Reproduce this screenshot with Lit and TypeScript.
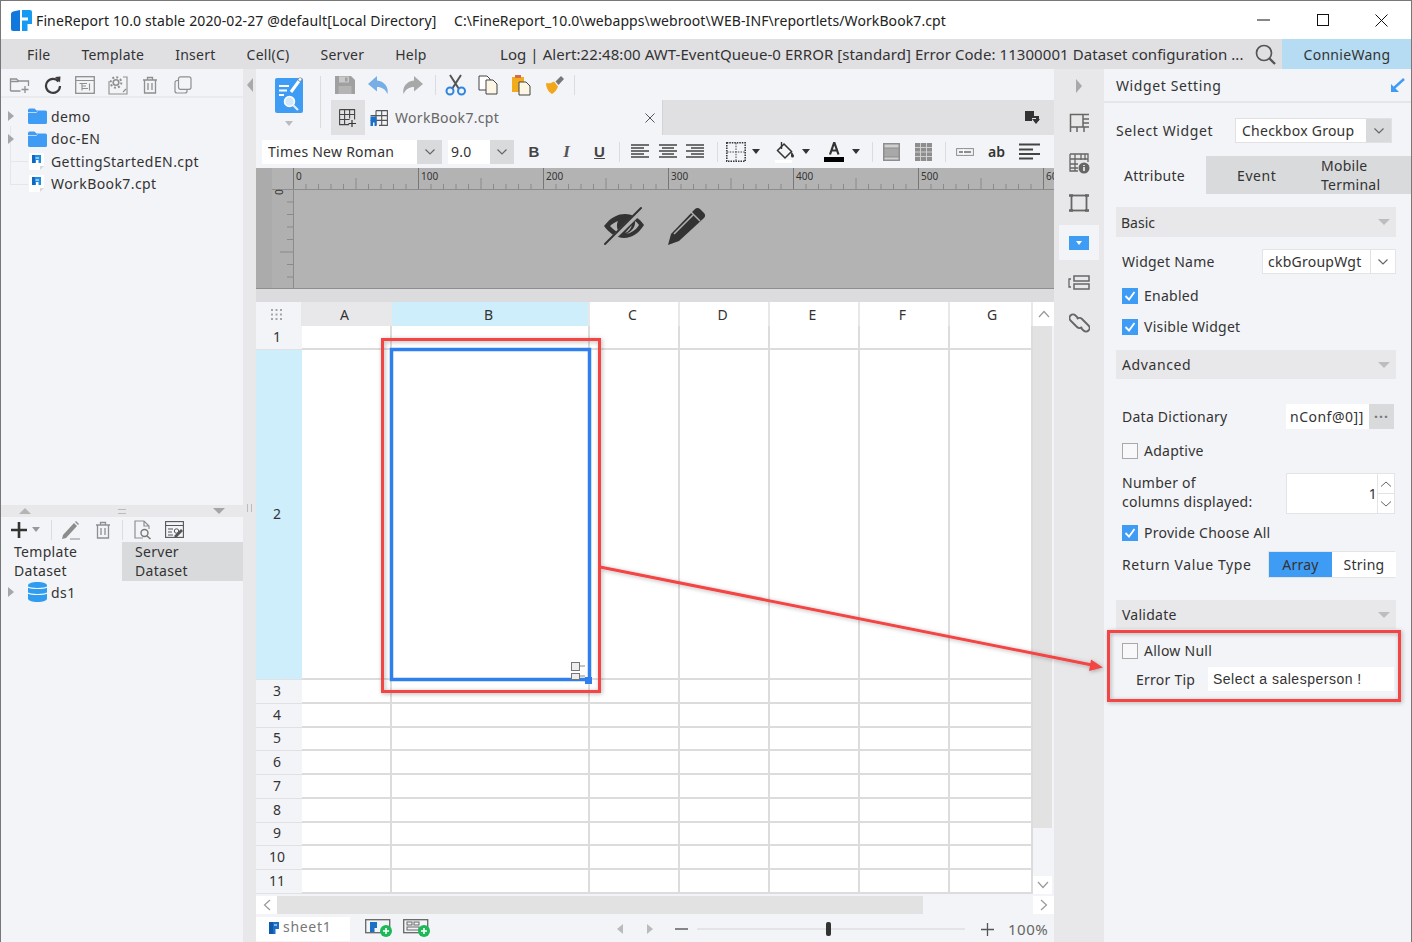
import { LitElement, html, css, svg } from "lit";
import { customElement } from "lit/decorators.js";

const G = "#8f8f8f";
const icon = (w: number, h: number, body: unknown) =>
  html`<svg class="ic" width=${w} height=${h} viewBox="0 0 ${w} ${h}" fill="none">${body}</svg>`;

const chevron = (c = "#666") => icon(12, 8, svg`<path d="M1.5 1.5 6 6l4.5-4.5" stroke=${c} stroke-width="1.2"/>`);
const caret = (c = "#333") => icon(8, 5, svg`<path d="M0 0h8L4 5z" fill=${c}/>`);

const I = {
  logo: icon(21, 21, svg`<path d="M0 4Q0 2 2 1.500L9 0V21H2Q0 21 0 19z" fill="#1077dc"/><path d="M11 0H19Q21 0 21 2V14H16.500V21H11V10.500H17V7.500H11z" fill="#179bf2"/>`),
  newFolder: icon(22, 20, svg`<path d="M1.5 16V4h6l2 2h10v5M1.5 16h10M1.5 6.5h8" stroke=${G} stroke-width="1.3"/><path d="M16 11v7M12.5 14.5h7" stroke=${G} stroke-width="1.3"/>`),
  refresh: icon(18, 18, svg`<path d="M14.5 5.5A7 7 0 1 0 16 10" stroke="#3c3c3c" stroke-width="2.2"/><path d="M11 1l5.500-.5L16 6.500z" fill="#3c3c3c"/>`),
  panel: icon(20, 18, svg`<rect x=".7" y=".7" width="18.6" height="16.6" stroke=${G} stroke-width="1.3"/><path d="M1 4.500h18M4.500 7.500H12M7 7.500v7M7 10h4M7 12.500h6M14.500 7.500v7" stroke=${G} stroke-width="1.1"/>`),
  gearFile: icon(20, 20, svg`<circle cx="8" cy="7.500" r="2.800" stroke=${G} stroke-width="1.600"/><circle cx="8" cy="7.500" r="5.300" stroke=${G} stroke-width="2" stroke-dasharray="2 2.100"/><path d="M1 6v13h18V2h-4M15 17l3-3" stroke=${G} stroke-width="1.100"/>`),
  trash: icon(16, 18, svg`<path d="M1 4h14M5.500 4V1.500h5V4M2.500 4v13h11V4M6 7v7M10 7v7" stroke=${G} stroke-width="1.3"/>`),
  copyBox: icon(18, 18, svg`<rect x="4.500" y=".8" width="12.500" height="12.500" rx="2" stroke=${G} stroke-width="1.2"/><path d="M4.500 4.500H3a2 2 0 0 0-2 2V15a2 2 0 0 0 2 2h8a2 2 0 0 0 2-2v-1.500" stroke=${G} stroke-width="1.2"/>`),
  folder: icon(19, 16, svg`<path d="M0 2a1.500 1.500 0 0 1 1.500-1.500h5L8.500 2.500h9A1.500 1.500 0 0 1 19 4v10.500a1.500 1.500 0 0 1-1.500 1.500h-16A1.500 1.500 0 0 1 0 14.500z" fill="#3f9cf5"/><path d="M0 4.500h8.500l1-1" stroke="#f4f5f8" stroke-width=".7"/>`),
  cpt: icon(16, 17, svg`<path d="M0 0h15v12l-4 5H0z" fill="#fff"/><path d="M3 2h9v8H9.500V7H7v3H3z" fill="#1c8ee6"/><path d="M3 2h3v8H3z" fill="#1467bf"/><path d="M6.500 5h3.500" stroke="#fff"/><path d="M11 13h4l-4 4z" fill="#d8d8d8"/>`),
  gridAdd: icon(18, 18, svg`<path d="M.6.6h15v10M.6.6v15h9.500M.6 5.500h15M.6 10.500h10M5.600.6v15M10.600.6v9" stroke="#444" stroke-width="1.100"/><path d="M13 11v7M9.500 14.500h7.500" stroke="#333" stroke-width="1.2"/>`),
  gridCpt: icon(18, 16, svg`<path d="M6 .6h11.400v14.800H9M6 .6v5M.6 5.600h16.800M.6 10.400h16.800M6 5.600v9.800M11.700.6v14.800" stroke="#555" stroke-width="1.100"/><path d="M.5 6.500h6V16H4.500v-3.500H3V16H.5z" fill="#1a6fc6"/>`),
  save: icon(22, 20, svg`<path d="M1 1h16l4 4v14H1z" fill="#a0a0a0"/><rect x="5" y="1.500" width="10" height="6" fill="#c9c9c9"/><rect x="11" y="2.500" width="2.500" height="4" fill="#a0a0a0"/><rect x="4.500" y="11" width="13" height="8" fill="#b4b4b4"/>`),
  undo: icon(22, 20, svg`<path d="M9 1 0 9l9 7.500V12c5 0 8 2 10.500 7 1.500-7-3.500-13-10.500-13.500z" fill="#77aee6"/>`),
  redo: icon(22, 20, svg`<path d="M12 1l9 8-9 7.500V12c-5 0-8 2-10.500 7C0 12 5 6 12 5.500z" fill="#a8a8a8"/>`),
  cut: icon(22, 22, svg`<path d="M5 1l9 14M16 1 7 15" stroke="#555" stroke-width="2"/><circle cx="5" cy="17" r="3.500" stroke="#2f86e0" stroke-width="2"/><circle cx="16.500" cy="17" r="3.500" stroke="#2f86e0" stroke-width="2"/>`),
  copy: icon(20, 20, svg`<path d="M1 1h8l3 3v11H1z" fill="#fff" stroke="#444"/><path d="M8 5h7l4 4v10H8z" fill="#fdf6e5" stroke="#444"/>`),
  paste: icon(20, 22, svg`<path d="M1 3h12v15H1z" fill="#f2ac1b"/><path d="M4 1h6v3H4z" fill="#d66a4c"/><path d="M8 8h7l4 4v9H8z" fill="#fdf6e5" stroke="#444"/>`),
  brush: icon(20, 20, svg`<path d="M1 8c4 1 6-.5 8-1.500l4 5c-1 3-3 6-6 7.500-4-2-6-7-6-11z" fill="#f2a71b"/><path d="M10.500 6.500 16 1l3 3-5.500 6z" fill="#777"/>`),
  bigDoc: icon(28, 36, svg`<rect y="1" width="28" height="35" rx="2" fill="#3f9cf5"/><path d="M4 9h10M4 13.500h8M4 18h5" stroke="#fff" stroke-width="1.800"/><path d="M16 15 24 4" stroke="#fff" stroke-width="3"/><circle cx="25" cy="2.500" r="1.800" fill="#fff" stroke="#777" stroke-width=".6"/><circle cx="14.500" cy="24.500" r="5" fill="#d3e8fb" stroke="#fff" stroke-width="1.500"/><path d="M18 28l5 5" stroke="#e9e9e9" stroke-width="2.200"/>`),
  fmtSmall: icon(16, 16, svg`<path d="M1 1h9v5h5v5h-3V8H8v3H1z" fill="#333"/><path d="M8 9h8l-4 5z" fill="#333"/>`),
  alignL: icon(18, 15, svg`<path d="M0 1h18M0 4h13M0 7h18M0 10h13M0 13h18" stroke="#444" stroke-width="1.300"/>`),
  alignC: icon(18, 15, svg`<path d="M0 1h18M3 4h12M0 7h18M3 10h12M0 13h18" stroke="#444" stroke-width="1.300"/>`),
  alignR: icon(18, 15, svg`<path d="M0 1h18M5 4h13M0 7h18M5 10h13M0 13h18" stroke="#444" stroke-width="1.300"/>`),
  border: icon(20, 20, svg`<rect x=".8" y=".8" width="18.400" height="18.400" stroke="#333" stroke-width="1.500" stroke-dasharray="1.500 1"/><path d="M10 1v18M1 10h18" stroke="#444" stroke-dasharray="1.500 1.200"/>`),
  fill: icon(20, 22, svg`<path d="M9 3l7.500 7.500-6.500 6.500-7.500-7.500z" stroke="#333" stroke-width="1.500"/><path d="M6.500 1v7" stroke="#333" stroke-width="1.400"/><path d="M16.500 10.500c1.500 2 2.500 3.500 2.500 4.500a1.500 1.500 0 0 1-3 0c0-1 0-2 .5-4.500z" fill="#333"/><rect y="19" width="17" height="3" fill="#fff"/>`),
  color: icon(20, 22, svg`<path d="M6 13.500 10 2h.5l4 11.500M7.300 9.500h6" stroke="#333" stroke-width="2.200"/><rect y="16" width="20" height="5" fill="#000"/>`),
  merge: icon(17, 18, svg`<rect width="17" height="18" fill="#8e8e8e"/><rect x="1.500" y="1.500" width="14" height="3" fill="#d0d0d0"/><rect x="1.500" y="5.500" width="14" height="8" fill="#a8a8a8"/><rect x="1.500" y="14.500" width="14" height="2" fill="#d0d0d0"/>`),
  unmerge: icon(17, 18, svg`<rect width="17" height="18" fill="#8e8e8e"/><path d="M5.500 0v18M11.500 0v18M0 4.500h17M0 9h17M0 13.500h17" stroke="#d0d0d0"/>`),
  textbox: icon(18, 10, svg`<rect x=".6" y="1.600" width="16.800" height="6.800" stroke=${G}/><path d="M3 5h12" stroke=${G} stroke-width="2"/><path d="M7.500 2v6" stroke="#fff"/>`),
  lines: icon(21, 17, svg`<path d="M0 1.500h21M0 6.500h14M0 11h21M0 15.500h14" stroke="#444" stroke-width="2"/>`),
  search: icon(22, 21, svg`<circle cx="9" cy="9" r="7.500" stroke="#555" stroke-width="1.700"/><path d="M14.500 14.500 20 20" stroke="#555" stroke-width="2.400"/>`),
  minW: icon(14, 2, svg`<path d="M0 1h13" stroke="#111"/>`),
  maxW: icon(12, 12, svg`<rect x=".5" y=".5" width="11" height="11" stroke="#111"/>`),
  closeW: icon(13, 13, svg`<path d="M.5.500l12 12M12.500.500l-12 12" stroke="#111"/>`),
  pinArrow: icon(15, 15, svg`<path d="M14 1 4 10" stroke="#3f9cf5" stroke-width="2.400"/><path d="M1 6v8h8z" fill="#3f9cf5"/>`),
  rFrame: icon(21, 20, svg`<path d="M1.500 19V1.500H20M1.500 14H20M8 14v5M15 14v5M14 1.500V14M14 6H20M14 10H20" stroke="#666" stroke-width="1.500"/>`),
  rInfo: icon(21, 21, svg`<path d="M1 1h18v8M1 1v17h8M1 6h18M1 11h8M1 15h8M6 1v17M12 1v6M16 1v6" stroke="#666" stroke-width="1.300"/><circle cx="15" cy="15" r="5.500" fill="#666"/><path d="M15 12v1M15 14v4" stroke="#fff" stroke-width="1.500"/>`),
  rBox: icon(20, 20, svg`<rect x="2.500" y="2.500" width="15" height="15" stroke="#666" stroke-width="1.800"/><path d="M0 2.500h4M16 2.500h4M0 17.500h4M16 17.500h4" stroke="#666" stroke-width="2.400"/>`),
  rWidget: icon(20, 14, svg`<rect width="20" height="14" fill="#3f9cf5"/><path d="M7 5h6l-3 4z" fill="#fff"/>`),
  rForm: icon(22, 16, svg`<path d="M3 4H1v8h2" stroke="#666" stroke-width="1.300"/><rect x="6" y="1" width="15" height="5" stroke="#666" stroke-width="1.500"/><rect x="6" y="9" width="15" height="5" stroke="#666" stroke-width="1.500"/>`),
  rLink: icon(21, 20, svg`<path d="M9 5 6.500 2.500a3.500 3.500 0 0 0-5 5L8 14a3.500 3.500 0 0 0 5 0" stroke="#666" stroke-width="1.800"/><path d="M12 15l2.500 2.500a3.500 3.500 0 0 0 5-5L13 6a3.500 3.500 0 0 0-5 0" stroke="#666" stroke-width="1.800"/>`),
  plus: icon(18, 18, svg`<path d="M9 1v16M1 9h16" stroke="#333" stroke-width="2.600"/>`),
  pencil: icon(20, 20, svg`<path d="M2 15 13 3l3 3L5 18l-4 1z" fill="#8c8c8c"/><path d="M14 2l1-1 3 3-1 1z" fill="#8c8c8c"/><path d="M9 19h10" stroke="#8c8c8c"/>`),
  docSearch: icon(18, 20, svg`<path d="M9 18H1V1h9l5 5v3M10 1v5h5" stroke=${G} stroke-width="1.2"/><circle cx="10.500" cy="13" r="3.500" stroke="#777" stroke-width="1.400"/><path d="M13 16l3.500 3" stroke="#777" stroke-width="1.600"/>`),
  dbEdit: icon(20, 18, svg`<rect x=".6" y=".6" width="17.800" height="15.800" stroke="#555" stroke-width="1.100"/><path d="M1 4.500h17M3 8h5M3 11h4M3 14h5" stroke="#555"/><path d="M9 15l7-7 2 2-7 7z" fill="#555"/><circle cx="11.500" cy="10" r="2.200" stroke="#555"/>`),
  db: icon(19, 20, svg`<path d="M0 3.500C0 1.500 4 0 9.500 0S19 1.500 19 3.500v13c0 2-4 3.500-9.500 3.500S0 18.500 0 16.500z" fill="#2f9cf0"/><path d="M0 5c2 2 17 2 19 0M0 11c2 2 17 2 19 0" stroke="#f3f4f7" stroke-width="1.2"/>`),
  eye: icon(42, 40, svg`<path d="M1 20C8 11 15 8 22 8c8 0 14 4 19 11-5 8-12 13-20 13C13 32 6 27 1 20z" fill="#333"/><path d="M7 20c3 3 6 6 10 7-3-3-4-8-2-12-3 1-6 3-8 5z" fill="#b2b2b2"/><path d="M32 15c2 1 3 3 4 4-3 5-8 8-13 9 5-2 10-7 9-13zM22 27c3-1 6-4 7-8l-7 8z" fill="#b2b2b2"/><path d="M4 38 40 3" stroke="#b2b2b2" stroke-width="5"/><path d="M2 38 38 2" stroke="#333" stroke-width="2" stroke-linecap="round"/>`),
  bigPencil: icon(40, 40, svg`<path d="M28 3c1.500-1.500 3.500-1.500 5 0l4 4c1.500 1.500 1.500 3.500 0 5L12 35 1 39l3-11z" fill="#333"/><path d="M7 28 26 9" stroke="#b2b2b2" stroke-width="1.600"/><path d="M24 6l9 9" stroke="#b2b2b2" stroke-width="1.400"/>`),
  sheetIc: icon(11, 12, svg`<path d="M0 0h10v7H6.500v5H0z" fill="#1a6fc6"/><path d="M0 0h4v12H0z" fill="#0f5aa8"/><path d="M5 3h3" stroke="#fff"/>`),
  addReport: icon(28, 18, svg`<rect x=".7" y=".7" width="24" height="13" stroke="#666" stroke-width="1.3"/><path d="M5 3h7v6H9.500v4H5z" fill="#1a6fc6"/><circle cx="21" cy="12" r="6" fill="#1fb858"/><path d="M21 9v6M18 12h6" stroke="#fff" stroke-width="1.6"/>`),
  addForm: icon(28, 18, svg`<rect x=".7" y=".7" width="24" height="13" stroke="#666" stroke-width="1.3"/><rect x="4" y="3" width="5" height="3" stroke="#666"/><rect x="11" y="3" width="5" height="3" stroke="#666"/><rect x="4" y="8" width="12" height="3" stroke="#666"/><circle cx="21" cy="12" r="6" fill="#1fb858"/><path d="M21 9v6M18 12h6" stroke="#fff" stroke-width="1.6"/>`),
  check: icon(16, 16, svg`<path d="M3.500 8 7 11.500 12.500 4" stroke="#fff" stroke-width="1.8"/>`),
  grip: icon(14, 12, svg`${[1, 5.5, 10].map((y) => [1, 5.5, 10].map((x) => svg`<rect x=${x + 1} y=${y} width="2" height="2" fill="#a5a5a5"/>`))}`),
};

const triL = icon(6, 14, svg`<path d="M6 0v14L0 7z" fill="#a9a9a9"/>`);
const triR = icon(6, 14, svg`<path d="M0 0v14l6-7z" fill="#a9a9a9"/>`);
const tree = icon(6, 10, svg`<path d="M0 0v10l6-5z" fill="#a6a6a6"/>`);
const secTri = icon(12, 6, svg`<path d="M0 0h12L6 6z" fill="#bdbdbd"/>`);

const ruler = () => {
  const marks = [] as unknown[];
  for (let i = 0; i <= 61; i++) {
    const x = 37 + i * 12.5;
    const h = i % 10 === 0 ? 21 : i % 5 === 0 ? 11 : 5;
    marks.push(svg`<path d="M${x + 0.5} ${21 - h}V21" stroke=${i % 10 === 0 ? "#777" : "#8a8a8a"}/>`);
    if (i % 10 === 0) marks.push(svg`<text x=${x + 3} y="12" class="rt">${i * 10}</text>`);
  }
  for (let i = 1; i <= 7; i++) {
    const y = 21 + i * 12.5;
    marks.push(svg`<path d="M${i === 5 ? 24 : 31} ${y + 0.5}H37" stroke="#8a8a8a"/>`);
  }
  return html`<svg class="ruler" width="798" height="121" viewBox="0 0 798 121">
    <rect width="798" height="121" fill="#b3b3b3"/>
    <rect width="16" height="121" fill="#ababab"/>
    <rect x="16" y="21" width="21" height="100" fill="#b0b0b0"/>
    <path d="M0 120.500H798" stroke="#8e8e8e"/>
    <path d="M37.500 0V120M16 21.500H798" stroke="#8c8c8c"/>
    ${marks}
    <text class="rt" transform="translate(19 24) rotate(90)" text-anchor="middle">0</text>
  </svg>`;
};

const cols = ["A", "B", "C", "D", "E", "F", "G"];
const rows = [1, 2, 3, 4, 5, 6, 7, 8, 9, 10, 11];

const sp = (w: number) => html`<span class="sp" style="width:${w}px"></span>`;
const btn = (w: number, c: unknown) => html`<span class="btn" style="width:${w}px">${c}</span>`;

@customElement("app-root")
export class AppRoot extends LitElement {
  static styles = css`
    :host {
      display: block; position: relative; width: 1412px; height: 942px; overflow: hidden; box-sizing: border-box;
      border: 1px solid #777; border-bottom: 0; background: #f3f4f7; color: #333;
      font-family: "Noto Sans", "Open Sans", sans-serif; font-size: 14px;
    }
    .ic { display: block; flex: none; }
    .btn { display: flex; align-items: center; justify-content: center; flex: none; }
    .sp { display: block; flex: none; }
    .title { height: 38px; background: #fff; display: flex; align-items: center; padding-left: 10px; color: #222; white-space: nowrap; font-size: 14px; }
    .title .t1 { margin-left: 4px; width: 418px; letter-spacing: .12px; }
    .title .t2 { flex: 1; letter-spacing: .09px; }
    .winbtns { display: flex; align-items: center; }
    .winbtns .btn { width: 59px; }
    .menu { height: 30px; background: #e0e0e3; display: flex; align-items: center; white-space: nowrap; }
    .menu .items { display: flex; gap: 31px; padding-left: 26px; width: 499px; box-sizing: border-box; flex: none; letter-spacing: .25px; }
    .menu .log { width: 746px; flex: none; font-size: 15px; letter-spacing: .07px; overflow: hidden; }
    .menu .srch { width: 27px; margin-left: 9px; flex: none; }
    .user { width: 130px; height: 30px; background: #b5dcf2; display: flex; align-items: center; justify-content: center; flex: none; letter-spacing: .3px; }
    .main { display: grid; grid-template-columns: 242px 13px 798px 50px 307px; height: 873px; }

    .left { display: flex; flex-direction: column; background: #f3f4f7; }
    .ltb { height: 23px; padding-top: 4px; display: flex; align-items: center; border-bottom: 2px solid #ebebee; padding-left: 3px; }
    .ltb .btn { width: 32.5px; }
    .tree {
      height: 407px; padding-top: 7px; box-sizing: border-box;
      background:
        linear-gradient(#e6e6e8, #e6e6e8) 9px 28px / 1px 58px no-repeat,
        linear-gradient(#e6e6e8, #e6e6e8) 9px 63px / 18px 1px no-repeat,
        linear-gradient(#e6e6e8, #e6e6e8) 9px 86px / 18px 1px no-repeat;
    }
    .tr { height: 22.5px; display: flex; align-items: center; padding-left: 7px; white-space: nowrap; letter-spacing: .42px; }
    .tr .tw { width: 6px; flex: none; margin-right: 14px; }
    .tr .tn { margin-left: 4px; }
    .tr.f .ic { margin-left: 1px; }
    .tr.f .tn { margin-left: 6px; }
    .hsplit { height: 12px; background: #e8e8ea; display: flex; align-items: center; justify-content: space-between; padding: 0 18px; }
    .hsplit .eq { width: 8px; height: 3px; border-top: 1px solid #bbb; border-bottom: 1px solid #bbb; }
    .dtb { height: 25px; display: flex; align-items: center; padding-left: 9px; }
    .vsep { width: 1px; height: 20px; background: #dcdcdf; flex: none; }
    .dtabs { display: grid; grid-template-columns: 121px 121px; height: 39px; line-height: 19px; letter-spacing: .3px; }
    .dtabs div { padding-left: 13px; }
    .dtabs .off { background: #d9dadc; }
    .splitv { background: #e8e8ea; display: flex; flex-direction: column; align-items: center; }
    .splitv .up { margin-top: 9px; }
    .splitv .gr { margin-top: 412px; width: 3px; height: 8px; border-left: 1px solid #bbb; border-right: 1px solid #bbb; }

    .center { display: flex; flex-direction: column; min-width: 0; }
    .tbtop { display: flex; height: 66px; }
    .bigcol { width: 75px; flex: none; position: relative; padding: 8px 0 0 19px; box-sizing: border-box; }
    .bigcol .car { position: absolute; left: 29px; top: 52px; }
    .bigcol .vs { position: absolute; left: 64px; top: 7px; height: 52px; width: 1px; background: #dcdcdf; }
    .tbright { flex: 1; display: flex; flex-direction: column; }
    .row1 { height: 31px; display: flex; align-items: center; }
    .row2 { height: 35px; background: #e0e0e3; display: flex; align-items: center; }
    .addtab { width: 34px; height: 35px; display: flex; align-items: center; justify-content: center; }
    .wtab { width: 298px; height: 35px; background: #f3f4f7; border-right: 1px solid #d4d4d6; display: flex; align-items: center; padding-left: 5px; box-sizing: border-box; color: #666; }
    .wtab span { flex: 1; margin-left: 7px; letter-spacing: .3px; }
    .wtab .x { margin-right: 7px; flex: none; }
    .row2 .end { margin-left: auto; margin-right: 14px; }
    .row3 { height: 33px; display: flex; align-items: center; padding-left: 6px; }
    .sel { display: flex; height: 24px; flex: none; background: #fff; align-items: center; box-sizing: border-box; }
    .sel .val { flex: 1; padding-left: 6px; white-space: nowrap; overflow: hidden; letter-spacing: .25px; }
    .sel.sz .val { padding-left: 3px; }
    .sel .dd { background: #d9dadc; height: 100%; display: flex; align-items: center; justify-content: center; flex: none; }
    .bold { font-family: "Liberation Sans", sans-serif; font-weight: 700; font-size: 15px; color: #444; }
    .ital { font-family: "Liberation Serif", serif; font-style: italic; font-weight: 700; font-size: 17px; color: #555; }
    .und { font-family: "Liberation Sans", sans-serif; font-weight: 700; font-size: 15px; text-decoration: underline; color: #444; }
    .ab { font-weight: 600; font-size: 14px; color: #333; flex: none; width: 17px; }
    .gap { height: 13px; background: #dcdcde; }
    .sheet { display: grid; grid-template-columns: 46px 90px 198px 90px 90px 90px 90px 83px 21px; grid-template-rows: 24px 24px 330px repeat(9, 23.78px); height: 592px; background: #fff; }
    .cell { border-right: 2px solid #dcdcdc; border-bottom: 2px solid #dcdcdc; box-sizing: border-box; }
    .ch { display: flex; align-items: center; justify-content: center; background: #fff; border-right: 2px solid #e8e8e8; box-sizing: border-box; color: #333; padding-right: 3px; }
    .ch.last { padding: 0 0 0 3px; }
    .ch.a { background: #e8e8ea; }
    .ch.on { background: #cdeefa; }
    .corner { background: #f3f4f7; display: flex; align-items: center; justify-content: center; border-right: 1px solid #e8e8e8; padding-right: 5px; }
    .rh { display: flex; align-items: center; justify-content: center; background: #f3f4f7; border-bottom: 1px solid #e1e1e1; color: #333; padding: 0 4px 2px 0; }
    .rh.on { background: #cdeefa; }
    .vs-up { background: #fff; display: flex; align-items: center; justify-content: center; }
    .vbar { grid-column: 9; grid-row: 2 / span 11; display: flex; flex-direction: column; background: #f3f4f7; }
    .vbar .th { height: 502px; width: 19px; background: #e2e2e2; }
    .vbar .tr2 { flex: 1; }
    .vbar .dn { height: 18px; width: 19px; background: #fff; display: flex; align-items: center; justify-content: center; }
    .hbar { height: 22px; display: flex; align-items: stretch; background: #f3f4f7; }
    .hbar .ab1 { width: 21px; margin: 2px 0; background: #fff; display: flex; align-items: center; justify-content: center; flex: none; }
    .hbar .th { width: 646px; margin: 2px 0; background: #e2e2e2; flex: none; }
    .hbar .ab2 { margin-left: 110px; }
    .sbar { flex: 1; display: flex; align-items: center; background: #f3f4f7; }
    .sbar .stab { width: 94px; height: 24px; background: #fff; display: flex; align-items: center; padding-left: 13px; box-sizing: border-box; color: #777; margin-right: 15px; }
    .sbar .stab span { margin: -5px 0 0 3px; letter-spacing: .7px; }
    .sbar .stab .ic { margin-top: -2px; }
    .sbar > .ic:nth-child(2), .sbar > .ic:nth-child(4) { margin-bottom: 2px; }
    .slider { width: 268px; height: 2px; background: #e4e4e4; position: relative; margin: 0 16px 0 9px; flex: none; }
    .slider i { position: absolute; left: 129px; top: -6px; width: 5px; height: 14px; border-radius: 2px; background: #333; }
    .pct { font-size: 15px; letter-spacing: .5px; color: #666; }

    .rail { background: #e8e8ea; display: flex; flex-direction: column; align-items: center; }
    .rail .railbtn { width: 40px; height: 40px; display: flex; align-items: center; justify-content: center; flex: none; }
    .rail .railbtn.on { background: #f3f4f7; height: 35px; margin: 2px 0 3px; }
    .rail .tri { height: 34px; display: flex; align-items: center; justify-content: center; }

    .right { background: #f3f4f7; display: flex; flex-direction: column; white-space: nowrap; letter-spacing: .25px; }
    .ls6 { letter-spacing: .6px; }
    .rh1 { height: 32px; border-bottom: 2px solid #e6e6e9; display: flex; align-items: center; justify-content: space-between; padding: 0 6px 0 12px; flex: none; }
    .row { display: flex; align-items: center; flex: none; }
    .lb { flex: none; }
    .selw { margin-top: 15px; height: 25px; padding-left: 12px; }
    .selw .lb { width: 119px; }
    .selw .sel { width: 157px; height: 25px; border: 1px solid #e1e1e4; }
    .selw .dd { width: 25px; }
    .ptabs { margin-top: 13px; height: 38px; display: grid; grid-template-columns: 102px 102px 103px; flex: none; }
    .ptabs > div { display: flex; align-items: center; background: #d9dadc; }
    .ptabs .on { background: #f3f4f7; padding-left: 20px; }
    .ptabs .ev { padding-left: 31px; }
    .ptabs .mob { padding-left: 13px; line-height: 19px; white-space: normal; }
    .sec { margin: 13px 15px 0 12px; height: 30px; background: #e8e8ea; display: flex; align-items: center; justify-content: space-between; padding: 0 6px; flex: none; }
    .sec.basic { letter-spacing: 0; padding-left: 5px; }
    .sec.adv { margin-top: 15px; height: 29px; }
    .sec.val { margin-top: 22px; height: 29px; }
    .fr { padding-left: 18px; }
    .wn { margin-top: 12px; height: 25px; }
    .wn .lb { width: 140px; }
    .wn .sel { width: 134px; height: 25px; border: 1px solid #e4e4e6; }
    .wn .val { padding-left: 5px; }
    .wn .dd { background: #fff; width: 24px; border-left: 1px solid #e1e1e1; }
    .cb { display: flex; align-items: center; height: 16px; padding-left: 18px; flex: none; }
    .cb span { margin: -2px 0 0 6px; }
    .box { width: 16px; height: 16px; box-sizing: border-box; border: 1px solid #a9a9a9; background: #f8f8fa; flex: none; }
    .box.on { background: #3f9cf5; border: 0; }
    .m14 { margin-top: 14px; }
    .m15 { margin-top: 15px; }
    .m11 { margin-top: 11px; }
    .dd1 { margin-top: 25px; height: 25px; }
    .dd1 .lb { width: 164px; }
    .dd1 .sel { width: 108px; height: 25px; }
    .dd1 .val { padding-left: 4px; letter-spacing: .5px; }
    .dd1 .dd { width: 25px; letter-spacing: 1px; color: #777; font-weight: 700; }
    .num { margin-top: 14px; height: 41px; }
    .num .lab { line-height: 19px; width: 164px; flex: none; margin-top: -3px; }
    .numin { width: 109px; height: 41px; display: flex; border: 1px solid #e4e4e6; box-sizing: border-box; background: #fff; flex: none; }
    .numin .v { flex: 1; text-align: right; padding-right: 0; line-height: 39px; }
    .numin .sp2 { width: 16px; border-left: 1px solid #e4e4e6; display: flex; flex-direction: column; }
    .numin .sp2 div { flex: 1; display: flex; align-items: center; justify-content: center; }
    .numin .sp2 div + div { border-top: 1px solid #e4e4e6; }
    .ret { margin-top: 10px; height: 27px; }
    .ret .lb { width: 146px; letter-spacing: .6px; }
    .seg { width: 127px; height: 27px; display: grid; grid-template-columns: 63px 64px; border: 1px solid #e4e4e6; box-sizing: border-box; flex: none; }
    .seg div { display: flex; align-items: center; justify-content: center; background: #fff; }
    .seg .on { background: #3f9cf5; }
    .et { margin-top: 8px; height: 24px; padding-left: 32px; }
    .et .lb { width: 72px; }
    .et .in { width: 186px; height: 24px; background: #fff; display: flex; align-items: center; padding-left: 5px; box-sizing: border-box; font-family: "Liberation Sans", Arial, sans-serif; letter-spacing: .5px; font-size: 14px; }

    .ruler { display: block; }
    .rt { font: 10px "Noto Sans", sans-serif; fill: #333; }
    .canvas { position: relative; height: 121px; }
    .eyes { position: absolute; left: 347px; top: 38px; display: flex; gap: 22px; align-items: center; }
    .overlay { position: absolute; left: -1px; top: -1px; pointer-events: none; }
  `;

  render() {
    return html`
      <div class="title">
        ${I.logo}
        <span class="t1">FineReport 10.0 stable 2020-02-27 @default[Local Directory]</span>
        <span class="t2">C:\\FineReport_10.0\\webapps\\webroot\\WEB-INF\\reportlets/WorkBook7.cpt</span>
        <div class="winbtns"><span class="btn">${I.minW}</span><span class="btn">${I.maxW}</span><span class="btn">${I.closeW}</span></div>
      </div>
      <div class="menu">
        <div class="items"><span>File</span><span>Template</span><span>Insert</span><span>Cell(C)</span><span>Server</span><span>Help</span></div>
        <span class="log">Log | Alert:22:48:00 AWT-EventQueue-0 ERROR [standard] Error Code: 11300001 Dataset configuration ...</span>
        <span class="srch">${I.search}</span>
        <div class="user">ConnieWang</div>
      </div>
      <div class="main">
        <div class="left">
          <div class="ltb">
            <span class="btn">${I.newFolder}</span><span class="btn">${I.refresh}</span><span class="btn">${I.panel}</span>
            <span class="btn">${I.gearFile}</span><span class="btn">${I.trash}</span><span class="btn">${I.copyBox}</span>
          </div>
          <div class="tree">
            <div class="tr"><span class="tw">${tree}</span>${I.folder}<span class="tn">demo</span></div>
            <div class="tr"><span class="tw">${tree}</span>${I.folder}<span class="tn">doc-EN</span></div>
            <div class="tr f"><span class="tw"></span>${I.cpt}<span class="tn">GettingStartedEN.cpt</span></div>
            <div class="tr f"><span class="tw"></span>${I.cpt}<span class="tn">WorkBook7.cpt</span></div>
          </div>
          <div class="hsplit">
            ${icon(12, 6, svg`<path d="M0 6h12L6 0z" fill="#b5b5b5"/>`)}<span class="eq"></span>${icon(12, 6, svg`<path d="M0 0h12L6 6z" fill="#a5a5a5"/>`)}
          </div>
          <div class="dtb">
            ${I.plus}${sp(4)}${caret("#999")}${sp(11)}<span class="vsep"></span>${sp(9)}${I.pencil}${sp(14)}${btn(16, I.trash)}${sp(11)}<span class="vsep"></span>${sp(11)}${I.docSearch}${sp(13)}${I.dbEdit}
          </div>
          <div class="dtabs"><div>Template<br />Dataset</div><div class="off">Server<br />Dataset</div></div>
          <div class="tr"><span class="tw">${tree}</span>${I.db}<span class="tn">ds1</span></div>
        </div>
        <div class="splitv"><span class="up">${triL}</span><span class="gr"></span></div>
        <div class="center">
          <div class="tbtop">
            <div class="bigcol">${I.bigDoc}<span class="car">${caret("#bbb")}</span><span class="vs"></span></div>
            <div class="tbright">
              <div class="row1">
                ${sp(3)}${I.save}${sp(12)}${I.undo}${sp(12)}${I.redo}${sp(11)}<span class="vsep"></span>${sp(9)}${I.cut}${sp(11)}${I.copy}${sp(13)}${I.paste}${sp(14)}${I.brush}${sp(9)}<span class="vsep"></span>
              </div>
              <div class="row2">
                <span class="addtab">${I.gridAdd}</span>
                <div class="wtab">${I.gridCpt}<span>WorkBook7.cpt</span><span class="x">${icon(10, 10, svg`<path d="M.5.5l9 9M9.500.5l-9 9" stroke="#555"/>`)}</span></div>
                <span class="end">${I.fmtSmall}</span>
              </div>
            </div>
          </div>
          <div class="row3">
            <div class="sel" style="width:180px"><span class="val">Times New Roman</span><span class="dd" style="width:25px">${chevron()}</span></div>
            ${sp(6)}
            <div class="sel sz" style="width:66px"><span class="val">9.0</span><span class="dd" style="width:24px">${chevron()}</span></div>
            ${sp(4)}
            ${btn(32, html`<span class="bold">B</span>`)}${btn(33, html`<span class="ital">I</span>`)}${btn(33, html`<span class="und">U</span>`)}
            ${sp(3)}<span class="vsep"></span>${sp(11)}${I.alignL}${sp(10)}${I.alignC}${sp(9)}${I.alignR}${sp(13)}<span class="vsep"></span>
            ${sp(8)}${I.border}${sp(6)}${caret()}${sp(15)}${I.fill}${sp(7)}${caret()}${sp(14)}${I.color}${sp(8)}${caret()}
            ${sp(12)}<span class="vsep"></span>${sp(10)}${I.merge}${sp(15)}${I.unmerge}${sp(13)}<span class="vsep"></span>${sp(10)}${I.textbox}${sp(14)}<span class="ab">ab</span>${sp(14)}${I.lines}
          </div>
          <div class="canvas">${ruler()}<div class="eyes">${I.eye}${I.bigPencil}</div></div>
          <div class="gap"></div>
          <div class="sheet">
            <div class="corner">${I.grip}</div>
            ${cols.map((c) => html`<div class="ch ${c === "A" ? "a" : ""} ${c === "B" ? "on" : ""} ${c === "G" ? "last" : ""}">${c}</div>`)}
            <div class="vs-up">${icon(12, 8, svg`<path d="M1 7 6 1.500 11 7" stroke="#999" stroke-width="1.2"/>`)}</div>
            ${rows.map(
              (r) => html`<div class="rh ${r === 2 ? "on" : ""}">${r}</div>
                ${cols.map(() => html`<div class="cell"></div>`)}
                ${r === 1
                  ? html`<div class="vbar"><div class="th"></div><div class="tr2"></div><div class="dn">${icon(12, 8, svg`<path d="M1 1l5 5.500L11 1" stroke="#999" stroke-width="1.2"/>`)}</div></div>`
                  : ""}`
            )}
          </div>
          <div class="hbar">
            <span class="ab1">${icon(8, 12, svg`<path d="M7 1 1.500 6 7 11" stroke="#999" stroke-width="1.2"/>`)}</span>
            <span class="th"></span>
            <span class="ab1 ab2">${icon(8, 12, svg`<path d="M1 1l5.500 5L1 11" stroke="#999" stroke-width="1.2"/>`)}</span>
          </div>
          <div class="sbar">
            <div class="stab">${I.sheetIc}<span>sheet1</span></div>
            ${I.addReport}${sp(10)}${I.addForm}
            ${sp(186)}${icon(6, 10, svg`<path d="M6 0v10L0 5z" fill="#bbb"/>`)}${sp(24)}${icon(6, 10, svg`<path d="M0 0v10l6-5z" fill="#bbb"/>`)}
            ${sp(22)}${icon(13, 2, svg`<path d="M0 1h13" stroke="#555" stroke-width="1.4"/>`)}
            <div class="slider"><i></i></div>
            ${icon(13, 13, svg`<path d="M6.500 0v13M0 6.500h13" stroke="#555" stroke-width="1.3"/>`)}${sp(14)}<span class="pct">100%</span>
          </div>
        </div>
        <div class="rail">
          <div class="tri">${triR}</div>
          <div class="railbtn">${I.rFrame}</div>
          <div class="railbtn">${I.rInfo}</div>
          <div class="railbtn">${I.rBox}</div>
          <div class="railbtn on">${I.rWidget}</div>
          <div class="railbtn">${I.rForm}</div>
          <div class="railbtn">${I.rLink}</div>
        </div>
        <div class="right">
          <div class="rh1"><span class="ls6">Widget Setting</span>${I.pinArrow}</div>
          <div class="row selw"><span class="lb ls6">Select Widget</span>
            <div class="sel"><span class="val">Checkbox Group</span><span class="dd">${chevron()}</span></div></div>
          <div class="ptabs"><div class="on">Attribute</div><div class="ev ls6">Event</div><div class="mob">Mobile<br />Terminal</div></div>
          <div class="sec basic"><span>Basic</span>${secTri}</div>
          <div class="row fr wn"><span class="lb">Widget Name</span>
            <div class="sel"><span class="val">ckbGroupWgt</span><span class="dd">${chevron()}</span></div></div>
          <div class="cb m14"><i class="box on">${I.check}</i><span>Enabled</span></div>
          <div class="cb m15"><i class="box on">${I.check}</i><span>Visible Widget</span></div>
          <div class="sec adv"><span class="ls6">Advanced</span>${secTri}</div>
          <div class="row fr dd1"><span class="lb">Data Dictionary</span>
            <div class="sel"><span class="val">nConf@0]]</span><span class="dd">···</span></div></div>
          <div class="cb m14"><i class="box"></i><span>Adaptive</span></div>
          <div class="row fr num"><div class="lab">Number of<br />columns displayed:</div>
            <div class="numin"><div class="v">1</div><div class="sp2">
              <div>${icon(12, 8, svg`<path d="M1 6.500 6 2l5 4.500" stroke="#666"/>`)}</div>
              <div>${icon(12, 8, svg`<path d="M1 1.500 6 6l5-4.500" stroke="#666"/>`)}</div>
            </div></div></div>
          <div class="cb m11"><i class="box on">${I.check}</i><span>Provide Choose All</span></div>
          <div class="row fr ret"><span class="lb">Return Value Type</span>
            <div class="seg"><div class="on">Array</div><div>String</div></div></div>
          <div class="sec val"><span>Validate</span>${secTri}</div>
          <div class="cb m14"><i class="box"></i><span>Allow Null</span></div>
          <div class="row et"><span class="lb">Error Tip</span><div class="in">Select a salesperson !</div></div>
        </div>
      </div>
      <svg class="overlay" width="1412" height="942" viewBox="0 0 1412 942" fill="none">
        <defs><filter id="sh" x="-5%" y="-5%" width="110%" height="110%"><feDropShadow dx="1" dy="1" stdDeviation="2" flood-color="#000" flood-opacity=".3"/></filter></defs>
        <rect x="391.500" y="349.500" width="198" height="330" stroke="#2f80ed" stroke-width="3.5"/>
        <rect x="585" y="677" width="7" height="7" fill="#2f80ed"/>
        <rect x="571.500" y="662.500" width="8" height="8" fill="#eee" stroke="#777"/>
        <rect x="571.500" y="673.500" width="8" height="6" fill="#eee" stroke="#777"/>
        <path d="M580 666h5M580 676h5" stroke="#888"/>
        <g filter="url(#sh)">
          <rect x="382.500" y="339.500" width="217" height="352" stroke="#f44444" stroke-width="3"/>
          <rect x="1108.500" y="631.500" width="291" height="69" stroke="#f44444" stroke-width="3"/>
          <path d="M600 567 1092 665" stroke="#f44444" stroke-width="3"/>
          <path d="M1103 667.500 1089 671 1091 659.500z" fill="#f44444"/>
        </g>
      </svg>
    `;
  }
}
